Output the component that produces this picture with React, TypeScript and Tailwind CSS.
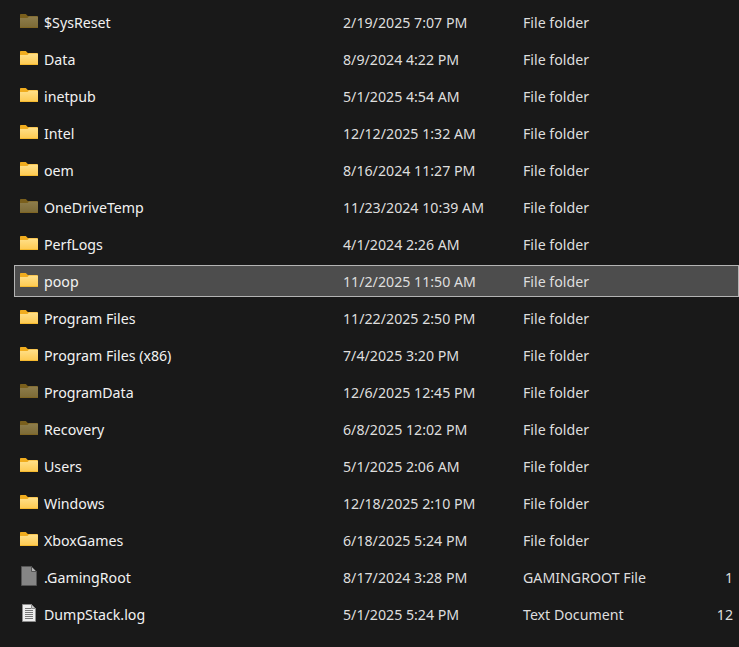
const rows: [string, string, string, string, string][] = [
  ["dim", "$SysReset", "2/19/2025 7:07 PM", "File folder", ""],
  ["folder", "Data", "8/9/2024 4:22 PM", "File folder", ""],
  ["folder", "inetpub", "5/1/2025 4:54 AM", "File folder", ""],
  ["folder", "Intel", "12/12/2025 1:32 AM", "File folder", ""],
  ["folder", "oem", "8/16/2024 11:27 PM", "File folder", ""],
  ["dim", "OneDriveTemp", "11/23/2024 10:39 AM", "File folder", ""],
  ["folder", "PerfLogs", "4/1/2024 2:26 AM", "File folder", ""],
  ["folder", "poop", "11/2/2025 11:50 AM", "File folder", ""],
  ["folder", "Program Files", "11/22/2025 2:50 PM", "File folder", ""],
  ["folder", "Program Files (x86)", "7/4/2025 3:20 PM", "File folder", ""],
  ["dim", "ProgramData", "12/6/2025 12:45 PM", "File folder", ""],
  ["dim", "Recovery", "6/8/2025 12:02 PM", "File folder", ""],
  ["folder", "Users", "5/1/2025 2:06 AM", "File folder", ""],
  ["folder", "Windows", "12/18/2025 2:10 PM", "File folder", ""],
  ["folder", "XboxGames", "6/18/2025 5:24 PM", "File folder", ""],
  ["blank", ".GamingRoot", "8/17/2024 3:28 PM", "GAMINGROOT File", "1"],
  ["text", "DumpStack.log", "5/1/2025 5:24 PM", "Text Document", "12"],
];

function Folder({ dim }: { dim: boolean }) {
  const tab = dim ? "#7a5f1c" : "#f0ac1e";
  const edge = dim ? "#7f6523" : "#f5b92f";
  const top = dim ? "#8e7d4c" : "#ffe08a";
  const bottom = dim ? "#7c6a35" : "#fdc94f";
  const id = dim ? "fd" : "fb";
  return (
    <svg width="18" height="14" viewBox="0 0 18 14" className="block">
      <defs>
        <linearGradient id={id} x1="0" y1="0" x2="0" y2="1">
          <stop offset="0" stopColor={top} />
          <stop offset="1" stopColor={bottom} />
        </linearGradient>
      </defs>
      <path d="M0 .8a.8.8 0 0 1 .8-.8h5l2 2H17a1 1 0 0 1 1 1v1H0z" fill={tab} />
      <path d="M0 4H7.5L9 2.6H17a1 1 0 0 1 1 1V13a1 1 0 0 1-1 1H1a1 1 0 0 1-1-1z" fill={`url(#${id})`} />
      <rect x="0" y="13" width="18" height="1" fill={edge} />
    </svg>
  );
}

function BlankFile() {
  return (
    <svg width="16" height="20" viewBox="0 0 16 20" className="block">
      <path d="M.5.5H10.5L15.5 5.5V19.5H.5z" fill="#858585" stroke="#555555" />
      <path d="M10.5.5V5.5H15.5z" fill="#b5b5b5" stroke="#555555" />
    </svg>
  );
}

function TextFile() {
  return (
    <svg width="14" height="18" viewBox="0 0 14 18" className="block">
      <path d="M.5.5H9.5L13.5 4.5V17.5H.5z" fill="#eeeeee" stroke="#8c8c8c" />
      <path d="M9.5.5V4.5H13.5z" fill="#c8c8c8" stroke="#8c8c8c" />
      <path d="M3 4.5H9M3 6.5H11M3 8.5H11M3 10.5H11M3 12.5H11M3 14.5H11" stroke="#777777" />
    </svg>
  );
}

function Icon({ kind }: { kind: string }) {
  if (kind === "folder") return <Folder dim={false} />;
  if (kind === "dim") return <Folder dim />;
  if (kind === "blank") return <div className="ml-px"><BlankFile /></div>;
  return <div className="ml-[2px]"><TextFile /></div>;
}

export default function App() {
  return (
    <div className="h-[647px] w-[739px] overflow-hidden bg-[#191919] pt-[6px] pl-[14px] font-['Noto_Sans','Open_Sans',sans-serif] text-[14.2px] text-[#dedede]">
      <div className="flex flex-col gap-[5px]">
        {rows.map(([kind, name, date, type, size]) => (
          <div
            key={name}
            className={
              "flex h-[32px] items-center border " +
              (name === "poop" ? "border-[#b4b4b4] bg-[#4d4d4d]" : "border-transparent")
            }
          >
            <div className="flex w-[29px] shrink-0 justify-start pb-[2px] pl-[5px]">
              <Icon kind={kind} />
            </div>
            <div className="w-[299px] shrink-0 pt-[1px] text-[#f2f2f2]">{name}</div>
            <div className="w-[180px] shrink-0 pt-[1px]">{date}</div>
            <div className="w-[180px] shrink-0 pt-[1px]">{type}</div>
            <div className="w-[30px] shrink-0 pt-[1px] text-right">{size}</div>
          </div>
        ))}
      </div>
    </div>
  );
}
